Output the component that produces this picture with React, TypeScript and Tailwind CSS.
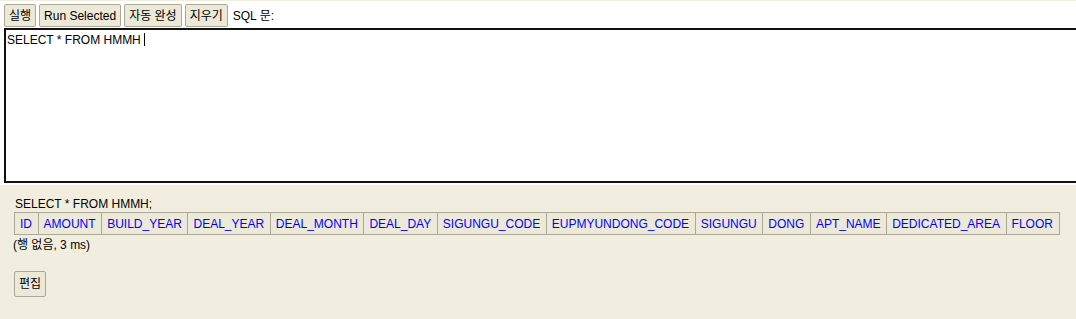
import React from "react";

const columns = [
  "ID",
  "AMOUNT",
  "BUILD_YEAR",
  "DEAL_YEAR",
  "DEAL_MONTH",
  "DEAL_DAY",
  "SIGUNGU_CODE",
  "EUPMYUNDONG_CODE",
  "SIGUNGU",
  "DONG",
  "APT_NAME",
  "DEDICATED_AREA",
  "FLOOR",
];

function ToolButton({ children }: { children: React.ReactNode }) {
  return (
    <button className="h-[23px] px-[4px] border border-[#aca899] rounded-[2px] bg-[#ece9d8] text-[12px] leading-none text-black">
      {children}
    </button>
  );
}

export default function App() {
  return (
    <div
      className="w-[1076px] h-[319px] overflow-hidden bg-[#f1eedf] text-[12px] text-black"
      style={{ fontFamily: '"Liberation Sans", Arial, "Noto Sans CJK KR", sans-serif' }}
    >
      <div className="mt-[1px] bg-white">
        <div className="flex items-center gap-[3px] pl-[4px] pt-[2px] h-[27px]">
          <ToolButton>실행</ToolButton>
          <ToolButton>Run Selected</ToolButton>
          <ToolButton>자동 완성</ToolButton>
          <ToolButton>지우기</ToolButton>
          <span className="ml-[2px]">SQL 문:</span>
        </div>
        <div className="pl-[4px] pb-[2px]">
          <div className="w-[1090px] h-[155px] border-2 border-[#111] bg-white px-[1px] pt-[3px] leading-[14px]">
            SELECT * FROM HMMH{" "}
            <span className="inline-block w-px h-[13px] bg-black align-[-2px]" />
          </div>
        </div>
      </div>
      <div className="pl-[14px] pt-[12px]">
        <div className="pl-[1px] leading-[14px]">SELECT * FROM HMMH;</div>
        <table className="border-collapse mt-[1px]">
          <thead>
            <tr>
              {columns.map((c) => (
                <th
                  key={c}
                  className="border border-[#aca899] bg-[#ece9d8] pl-[5px] pr-[5.6px] h-[22px] font-normal text-left text-[#0000ff] whitespace-nowrap"
                >
                  {c}
                </th>
              ))}
            </tr>
          </thead>
        </table>
        <div className="mt-[3px] -ml-[1px] leading-[14px]">(행 없음, 3 ms)</div>
        <button className="mt-[19px] h-[26px] px-[4px] border border-[#aca899] rounded-[2px] bg-[#ece9d8] text-[12px]">
          편집
        </button>
      </div>
    </div>
  );
}
